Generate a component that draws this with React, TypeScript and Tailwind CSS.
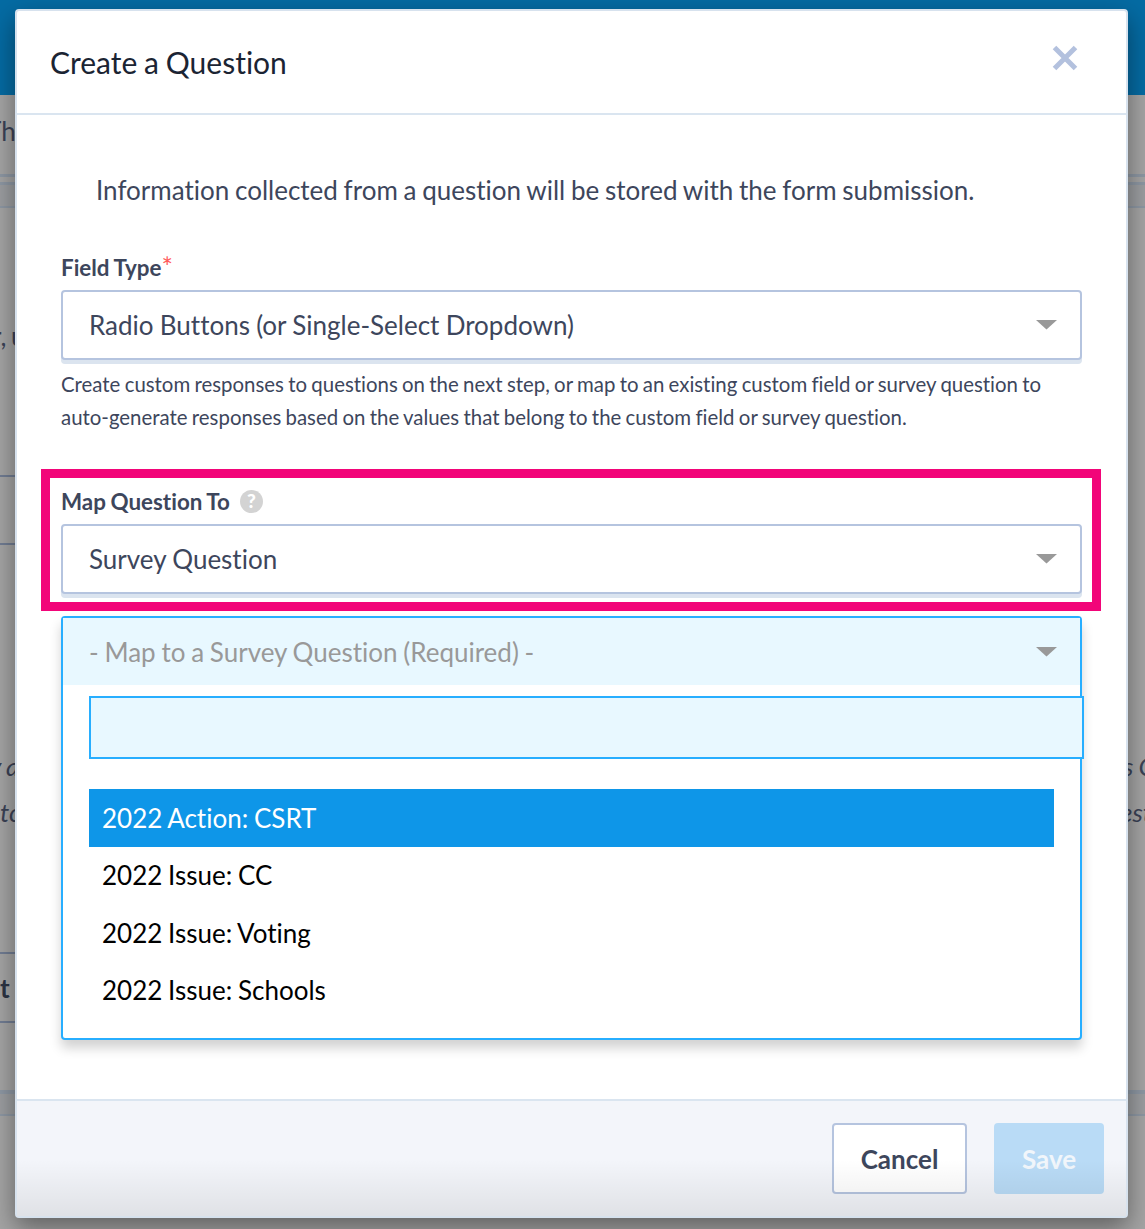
import { FC, ReactNode } from "react";

const options = [
  "2022 Action: CSRT",
  "2022 Issue: CC",
  "2022 Issue: Voting",
  "2022 Issue: Schools",
];

const Caret: FC = () => (
  <svg width="21" height="10" viewBox="0 0 21 10" className="shrink-0">
    <path d="M0 0h21L10.5 9.5z" fill="#999999" />
  </svg>
);

const Select: FC<{ children: ReactNode }> = ({ children }) => (
  <div className="flex h-[70px] items-center justify-between rounded-[4px] border-2 border-[#b5c4df] bg-white pl-[26px] pr-[23px] text-[26px] shadow-[0_4px_0_#dbe4ef]">
    <span className="pt-px [word-spacing:-0.4px]">{children}</span>
    <Caret />
  </div>
);

// The form builder page that sits dimmed behind the modal
const PageBehind: FC = () => (
  <div className="flex h-full flex-col whitespace-nowrap bg-[#a5a5a5] text-[26px] leading-[36px] text-[#3a4256]">
    <div className="h-[95px] shrink-0 bg-[#056ba3]"></div>
    <div className="flex h-[82px] shrink-0 items-center border-b-[3px] border-[#8e98a4]">
      <span className="-ml-[14px] pb-[8px]">Th</span>
    </div>
    <div className="mt-[5px] h-[26px] shrink-0 border-b-2 border-t-[3px] border-[#8e98a4] bg-[#9c9ea1]"></div>
    <div className="h-[267px] shrink-0 pt-[110px]">
      <span className="-ml-[8px] [word-spacing:-2px]">r, u</span>
    </div>
    <div className="h-[70px] w-[100px] shrink-0 border-y-2 border-[#717d93]"></div>
    <div className="flex h-[407px] shrink-0 justify-between pt-[198px] italic leading-[46px]">
      <div>
        <p className="-ml-[11px]">y a</p>
        <p>to</p>
      </div>
      <div className="w-[22px]">
        <p>s Q</p>
        <p className="-ml-[3px]">est</p>
      </div>
    </div>
    <div className="flex h-[71px] w-[100px] shrink-0 items-center border-y-2 border-[#717d93] font-bold text-[#2c3444]">
      t
    </div>
    <div className="mt-[67px] h-[26px] shrink-0 border-b-2 border-t-4 border-[#8e98a4] bg-[#9c9ea1]"></div>
  </div>
);

const App: FC = () => {
  return (
    <div className="relative h-[1229px] w-[1145px] overflow-hidden font-['Lato',sans-serif] [font-variant-ligatures:none] [word-spacing:-0.9px]">
      <PageBehind />
      <div className="absolute left-[15px] top-[9px] flex h-[1209px] w-[1113px] flex-col rounded-[4px] border-2 border-[#d7e2ee] bg-white text-[#3d465c] shadow-[0_10px_26px_rgba(0,0,0,0.42)]">
        <div className="flex h-[104px] shrink-0 items-center justify-between border-b-2 border-[#dae5f0] pl-[33px] pr-[48px]">
          <h1 className="text-[30px] leading-[36px] text-[#1b2433]">
            Create a Question
          </h1>
          <svg width="26" height="26" viewBox="0 0 26 26" className="mb-[8px]">
            <path d="M2.5 2.5l21 21M23.5 2.5l-21 21" stroke="#b3c1de" strokeWidth="5" />
          </svg>
        </div>

        <div className="flex-1 px-[44px] pt-[57px]">
          <p className="pl-[35px] text-[26px] leading-[36px]">
            Information collected from a question will be stored with the form
            submission.
          </p>

          <div className="mt-[45px] flex h-[28px] items-center pt-[2px] text-[22.4px] font-bold">
            Field Type
            <span className="pb-[4px] text-[27px] font-normal leading-none text-[#ff5a5a]">*</span>
          </div>
          <div className="mt-[9px]">
            <Select>Radio Buttons (or Single-Select Dropdown)</Select>
          </div>
          <p className="mt-[8px] text-[20.4px] leading-[32.5px]">
            Create custom responses to questions on the next step, or map to an
            existing custom field or survey question to auto-generate responses
            based on the values that belong to the custom field or survey
            question.
          </p>

          <div className="relative mt-[54px]">
            <div className="flex h-[28px] items-center gap-[10px] text-[22.4px] font-bold">
              <span className="pt-[2px]">Map Question To</span>
              <span className="flex size-[23px] items-center justify-center rounded-full bg-[#d3d3d3] text-[19px] font-black text-white">
                ?
              </span>
            </div>
            <div className="mt-[9px]">
              <Select>Survey Question</Select>
            </div>
            <div className="absolute -left-[20px] -right-[19px] -top-[18px] -bottom-[17px] border-[9px] border-[#f20579]"></div>
          </div>

          <div className="mt-[22px] h-[424px] rounded-[4px] border-2 border-[#27aeff] bg-white text-[26px] shadow-[0_8px_12px_rgba(0,0,0,0.18)]">
            <div className="flex h-[67px] items-center justify-between bg-[#e8f8ff] pl-[26px] pr-[23px] text-[#999999]">
              <span className="pt-[2px]">- Map to a Survey Question (Required) -</span>
              <Caret />
            </div>
            <div className="ml-[26px] mt-[11px] h-[63px] w-[995px] border-2 border-[#27aeff] bg-[#e8f8ff]"></div>
            <ul className="ml-[26px] mr-[26px] mt-[30px] text-black">
              {options.map((option, i) => (
                <li
                  key={option}
                  className={`flex h-[57.5px] items-center pl-[13px] pt-px ${
                    i === 0 ? "bg-[#0e96e8] text-white" : ""
                  }`}
                >
                  {option}
                </li>
              ))}
            </ul>
          </div>
        </div>

        <div className="flex h-[117px] shrink-0 justify-end gap-[27px] border-t-2 border-[#dae5f0] bg-[#f3f5fa] pr-[22px] pt-[22px] text-[26px] font-bold">
          <button className="h-[71px] w-[135px] rounded-[4px] border-2 border-[#b5c4df] bg-white pt-px">
            Cancel
          </button>
          <button className="h-[71px] w-[110px] rounded-[4px] bg-[#b9dbf6] pt-px text-[#f1f6fb]">
            Save
          </button>
        </div>
        <div className="absolute inset-x-0 bottom-0 h-[56px] bg-linear-to-b from-transparent to-black/8"></div>
      </div>
    </div>
  );
};

export default App;
